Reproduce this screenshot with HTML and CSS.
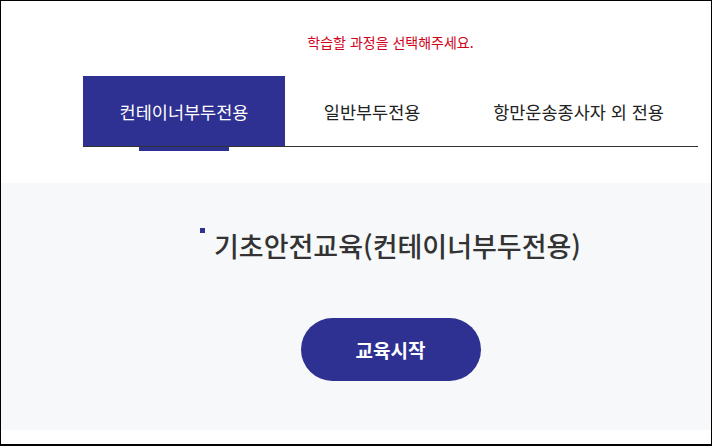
FILE: index.html
```html
<!DOCTYPE html>
<html lang="ko">
<head>
<meta charset="utf-8">
<title>과정 선택</title>
<link rel="stylesheet" href="styles.css">
</head>
<body>
<div class="frame">
  <div class="container top">
    <p class="notice">학습할 과정을 선택해주세요.</p>
    <ul class="tabs">
      <li class="tab active">컨테이너부두전용</li>
      <li class="tab">일반부두전용</li>
      <li class="tab">항만운송종사자 외 전용</li>
    </ul>
  </div>
  <div class="band">
    <div class="container inner">
      <h2 class="title"><span class="dot"></span>기초안전교육(컨테이너부두전용)</h2>
      <button class="start" type="button">교육시작</button>
    </div>
  </div>
</div>
</body>
</html>
```
FILE: styles.css
```css
* { box-sizing: border-box; }
html, body { margin: 0; padding: 0; background: #fff; }
body {
  font-family: "Noto Sans CJK KR", "Noto Sans", sans-serif;
  color: #333;
}
.frame {
  width: 712px;
  height: 446px;
  border: 1px solid #000;
  border-bottom-width: 2px;
  background: #fff;
  overflow: hidden;
}
.container {
  margin: 0 13px 0 82px;
}
.top {
  padding-top: 31px;
}
.notice {
  margin: 0;
  text-align: center;
  color: #d0021b;
  font-size: 14px;
  line-height: 20px;
}
.tabs {
  list-style: none;
  margin: 24px 0 0;
  padding: 0;
  display: flex;
  justify-content: space-between;
  border-bottom: 1px solid #333;
}
.tab {
  position: relative;
  flex: none;
  height: 70px;
  display: flex;
  align-items: center;
  justify-content: center;
  padding: 0 34px;
  font-size: 17.5px;
  white-space: nowrap;
  color: #222;
}
.tab.active {
  width: 202px;
  padding: 0;
  background: #2e3192;
  color: #fff;
}
.tab.active::after {
  content: "";
  position: absolute;
  left: 56px;
  width: 90px;
  bottom: -5px;
  height: 4px;
  background: #2e3192;
}
.band {
  margin-top: 36px;
  background: #f7f8fa;
}
.inner {
  padding: 45px 0 49px;
  display: flex;
  flex-direction: column;
  align-items: center;
}
.title {
  margin: 0;
  display: flex;
  align-items: flex-start;
  gap: 9px;
  font-size: 27px;
  line-height: 36px;
  font-weight: 500;
  color: #333;
}
.dot {
  width: 5px;
  height: 5px;
  background: #2e3192;
  flex: none;
}
.start {
  margin-top: 54px;
  width: 180px;
  height: 63px;
  border: 0;
  border-radius: 32px;
  background: #2e3192;
  color: #fff;
  font-family: "Noto Sans CJK KR", "Noto Sans", sans-serif;
  font-size: 19px;
  font-weight: 700;
  cursor: pointer;
}
```
